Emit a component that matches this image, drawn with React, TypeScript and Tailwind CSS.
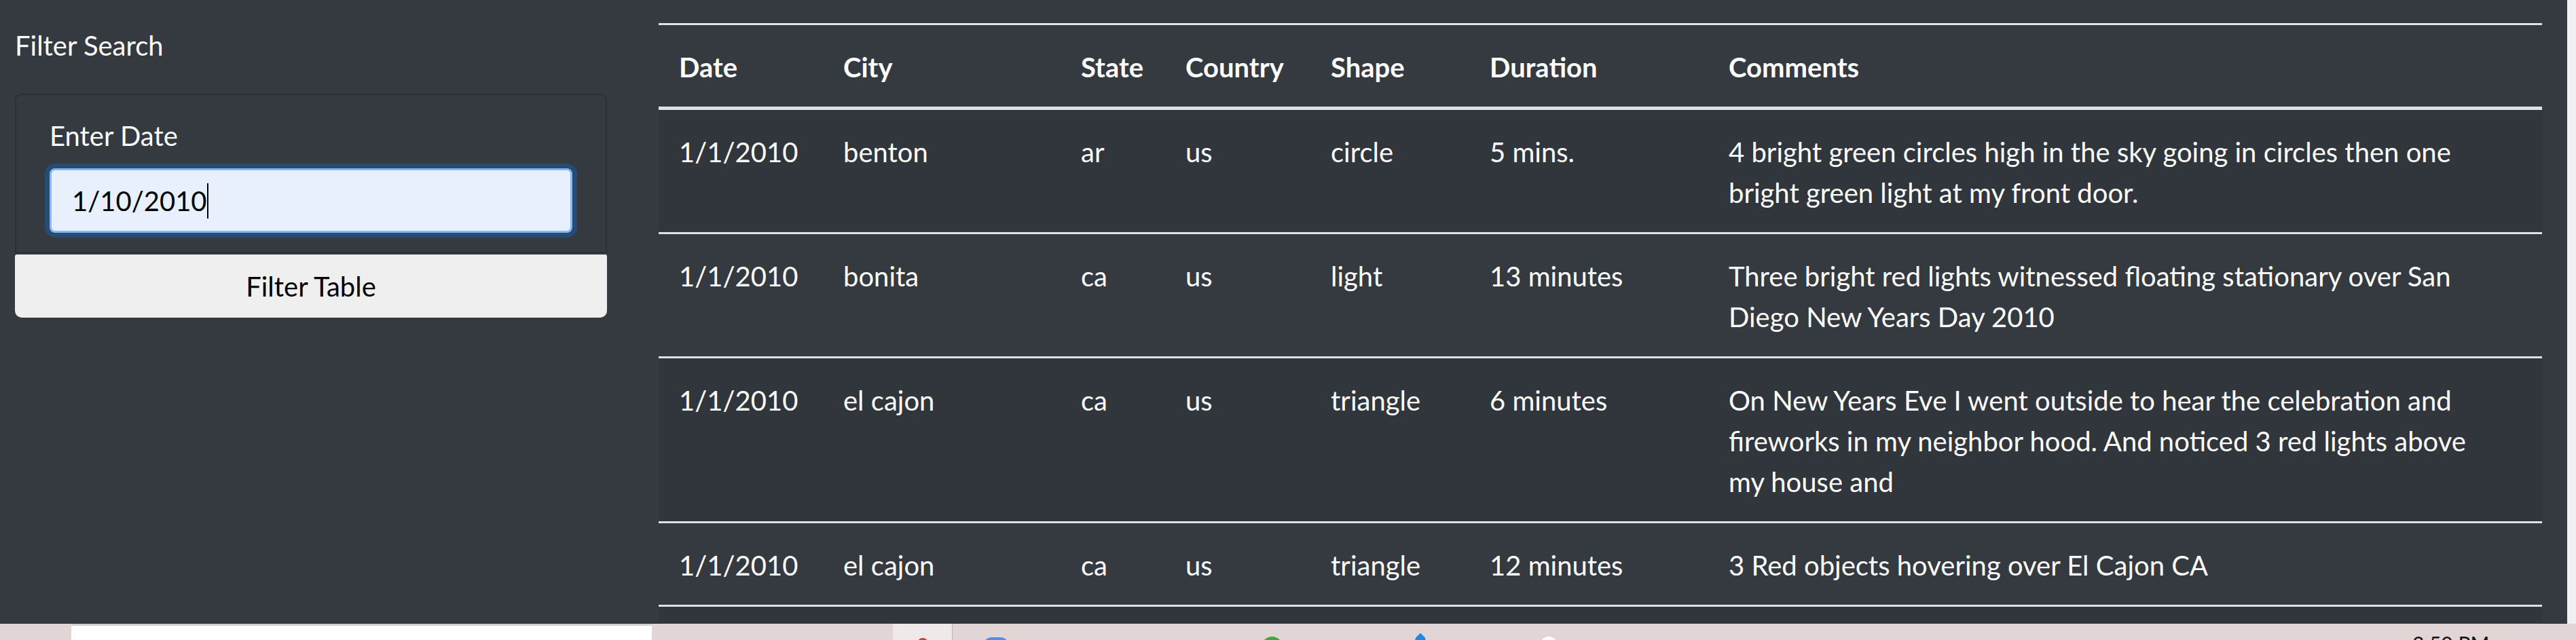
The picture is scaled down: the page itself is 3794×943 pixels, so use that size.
import React from "react";

type Sighting = {
  date: string;
  city: string;
  state: string;
  country: string;
  shape: string;
  duration: string;
  comments: string[];
};

const sightings: Sighting[] = [
  {
    date: "1/1/2010",
    city: "benton",
    state: "ar",
    country: "us",
    shape: "circle",
    duration: "5 mins.",
    comments: [
      "4 bright green circles high in the sky going in circles then one",
      "bright green light at my front door.",
    ],
  },
  {
    date: "1/1/2010",
    city: "bonita",
    state: "ca",
    country: "us",
    shape: "light",
    duration: "13 minutes",
    comments: [
      "Three bright red lights witnessed floating stationary over San",
      "Diego New Years Day 2010",
    ],
  },
  {
    date: "1/1/2010",
    city: "el cajon",
    state: "ca",
    country: "us",
    shape: "triangle",
    duration: "6 minutes",
    comments: [
      "On New Years Eve I went outside to hear the celebration and",
      "fireworks in my neighbor hood. And noticed 3 red lights above",
      "my house and",
    ],
  },
  {
    date: "1/1/2010",
    city: "el cajon",
    state: "ca",
    country: "us",
    shape: "triangle",
    duration: "12 minutes",
    comments: ["3 Red objects hovering over El Cajon CA"],
  },
];

const columns = ["Date", "City", "State", "Country", "Shape", "Duration", "Comments"];

function FilterPanel() {
  return (
    <div className="w-[970px] shrink-0 pl-[22px] pr-[76px]">
      <p className="pt-[37px] leading-[60px]">Filter Search</p>
      {/* Card with date input */}
      <div className="mt-[41px] border-2 border-[#2c3035] rounded-t-[10px] px-[49px] pt-[30px] pb-[28px]">
        <label className="block leading-[60px] mb-[18px]">Enter Date</label>
        <div className="h-[95px] rounded-[8px] border-[3px] border-[#86b7f5] bg-[#e8f0fe] shadow-[0_0_0_7px_#284b72] flex items-center pl-[30px] text-black">
          <span>1/10/2010</span>
          <span className="w-[2px] h-[52px] bg-black" />
        </div>
      </div>
      <button className="mt-[2px] h-[93px] w-full bg-[#efefef] text-black rounded-b-[10px] rounded-t-[3px] leading-[60px]">
        Filter Table
      </button>
    </div>
  );
}

function SightingsTable() {
  return (
    <div className="pt-[34px]">
      <table className="w-[2774px] table-fixed border-collapse">
        <colgroup>
          <col className="w-[242px]" />
          <col className="w-[350px]" />
          <col className="w-[154px]" />
          <col className="w-[214px]" />
          <col className="w-[234px]" />
          <col className="w-[352px]" />
          <col className="w-[1228px]" />
        </colgroup>
        <thead>
          <tr>
            {columns.map((c) => (
              <th
                key={c}
                className="text-left font-bold px-[30px] pt-[32px] pb-[28px] leading-[60px] border-t-[3px] border-b-[5px] border-[#dee2e6] align-bottom"
              >
                {c}
              </th>
            ))}
          </tr>
        </thead>
        <tbody>
          {sightings.map((s, i) => (
            <tr key={i} className={i % 2 === 0 ? "bg-[#31363c]" : ""}>
              {[s.date, s.city, s.state, s.country, s.shape, s.duration].map((v, j) => (
                <td key={j} className="px-[30px] pt-[32px] pb-[28px] leading-[60px] border-t-[3px] border-[#dee2e6] align-top">
                  {v}
                </td>
              ))}
              <td className="px-[30px] pt-[32px] pb-[28px] leading-[60px] border-t-[3px] border-[#dee2e6] align-top">
                {s.comments.map((line) => (
                  <div key={line} className="whitespace-nowrap">{line}</div>
                ))}
              </td>
            </tr>
          ))}
          <tr className="bg-[#31363c]">
            <td colSpan={7} className="h-[120px] border-t-[3px] border-[#dee2e6]" />
          </tr>
        </tbody>
      </table>
    </div>
  );
}

function Taskbar() {
  return (
    <div className="h-[24px] bg-[#e1d5d6] flex items-start overflow-hidden font-['Lato',sans-serif]">
      <div className="w-[105px] shrink-0" />
      {/* search box */}
      <div className="w-[855px] h-[24px] shrink-0 bg-white border-t-[3px] border-[#cfcfcf]" />
      <div className="w-[355px] shrink-0" />
      {/* active app */}
      <div className="w-[88px] h-[24px] shrink-0 bg-[#efe9ea] border-r border-[#b9b3b4] flex justify-center pt-[21px]">
        <div className="w-[16px] h-[16px] rounded-full bg-[#d93a2b]" />
      </div>
      <div className="w-[44px] shrink-0" />
      <div className="w-[40px] h-[24px] shrink-0 pt-[20px]">
        <div className="w-[40px] h-[20px] rounded-t-[14px] bg-[#4f8fe8]" />
      </div>
      <div className="w-[371px] shrink-0" />
      <div className="w-[31px] h-[24px] shrink-0 pt-[19px]">
        <div className="w-[31px] h-[20px] rounded-t-[16px] bg-[#3ea93a]" />
      </div>
      <div className="w-[195px] shrink-0" />
      <div className="w-[16px] h-[24px] shrink-0 pt-[17px]">
        <div className="w-[16px] h-[16px] rounded-[50%_0_50%_50%] rotate-[-45deg] bg-[#1e88e5]" />
      </div>
      <div className="w-[168px] shrink-0" />
      <div className="w-[26px] h-[24px] shrink-0 pt-[19px]">
        <div className="w-[26px] h-[26px] rounded-full bg-white" />
      </div>
      <div className="w-[1259px] shrink-0" />
      <div className="mt-[14px] text-[30px] leading-[30px] text-[#111] whitespace-nowrap">3:50 PM</div>
    </div>
  );
}

export default function App() {
  return (
    <div className="w-[3794px] h-[943px] overflow-hidden flex flex-col font-['Lato','Open_Sans',sans-serif] text-[40px] text-white">
      <div className="h-[919px] flex overflow-hidden">
        <div className="w-[3781px] shrink-0 bg-[#343a40] flex border-b border-[#2c3035]">
          <FilterPanel />
          <SightingsTable />
        </div>
        {/* scrollbar */}
        <div className="w-[13px] shrink-0 bg-[#f0f0f0]" />
      </div>
      <Taskbar />
    </div>
  );
}
